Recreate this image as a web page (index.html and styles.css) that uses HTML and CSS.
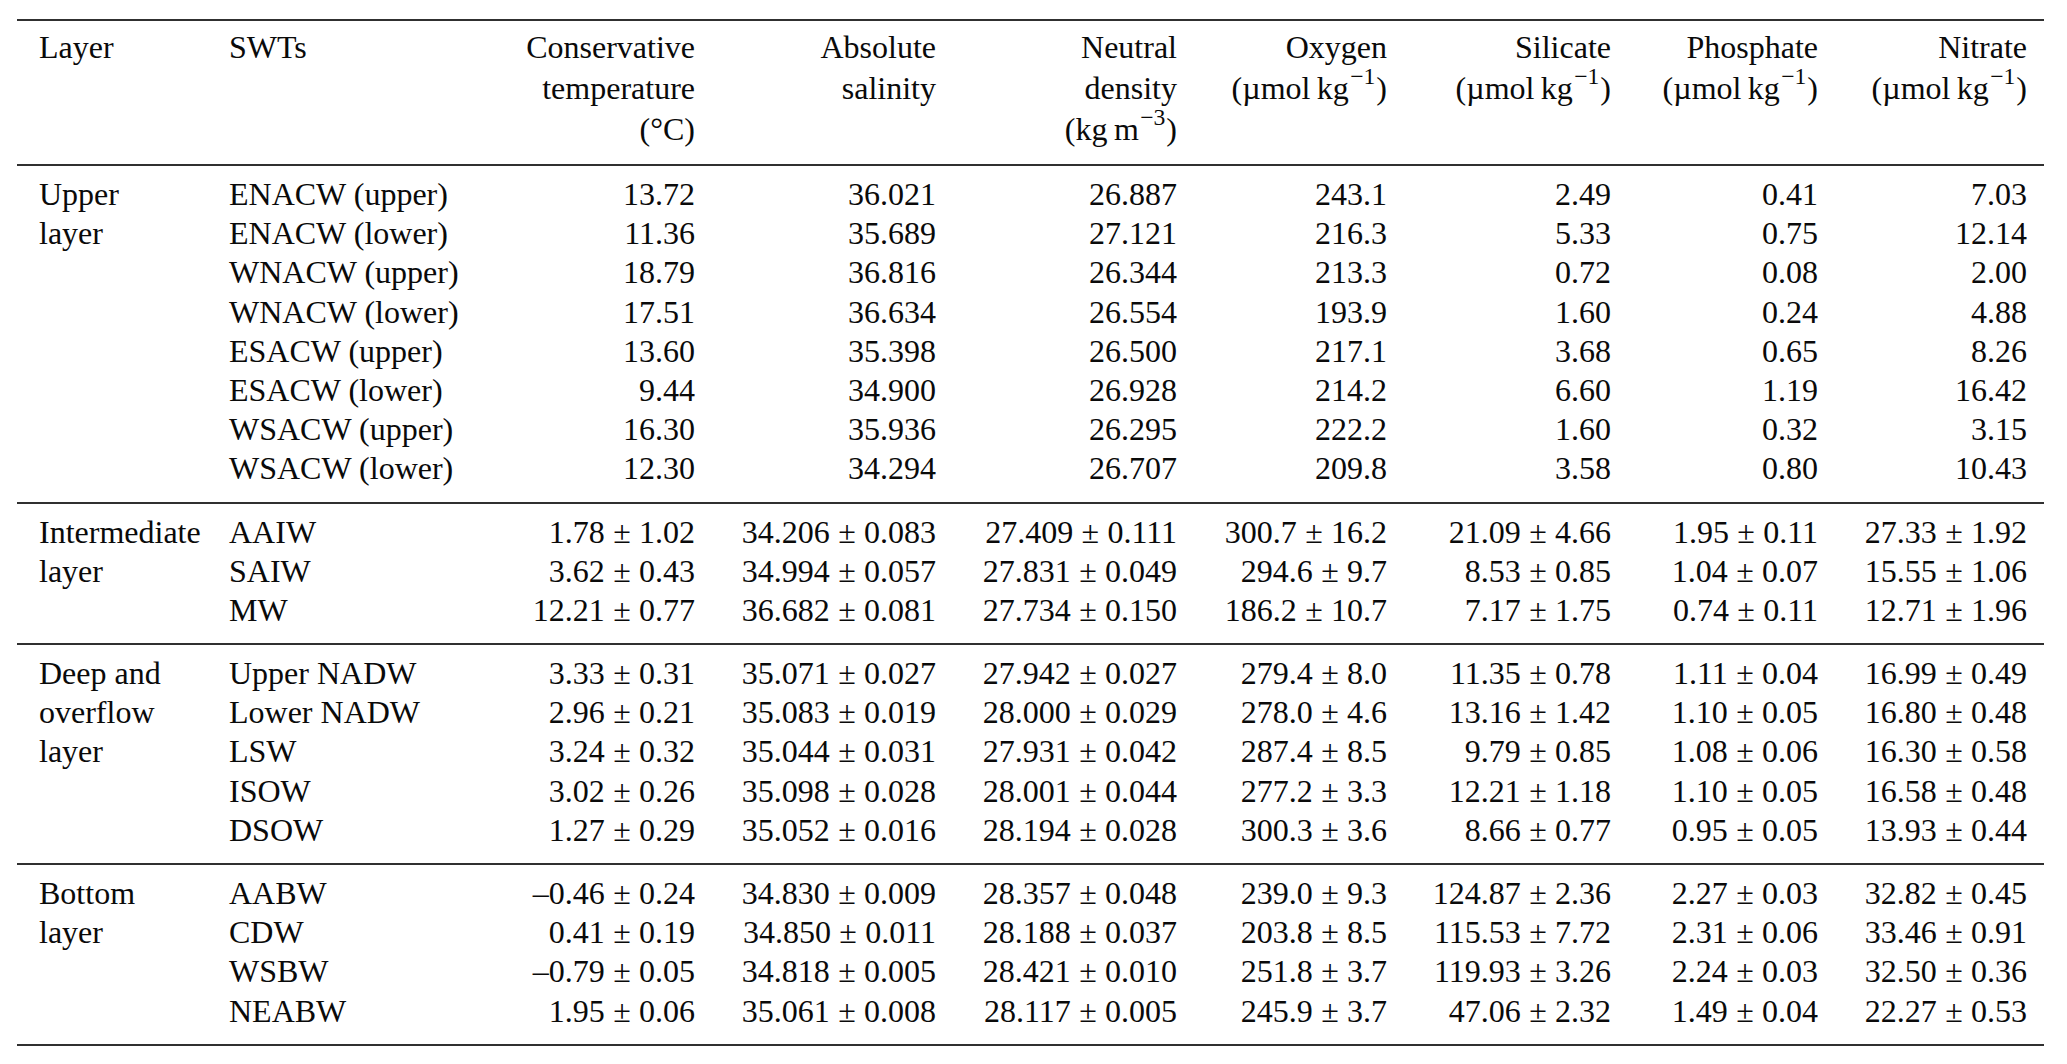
FILE: index.html
```html
<!DOCTYPE html>
<html>
<head>
<meta charset="utf-8">
<title>Source water types</title>
<link rel="stylesheet" href="styles.css">
</head>
<body>
<div class="table">
  <div class="grid head">
    <div class="l">Layer</div>
    <div class="l">SWTs</div>
    <div class="r">Conservative<br>temperature<br>(°C)</div>
    <div class="r">Absolute<br>salinity</div>
    <div class="r">Neutral<br>density<br>(kg&thinsp;m<span class="sup">−3</span>)</div>
    <div class="r">Oxygen<br>(µmol&thinsp;kg<span class="sup">−1</span>)</div>
    <div class="r">Silicate<br>(µmol&thinsp;kg<span class="sup">−1</span>)</div>
    <div class="r">Phosphate<br>(µmol&thinsp;kg<span class="sup">−1</span>)</div>
    <div class="r">Nitrate<br>(µmol&thinsp;kg<span class="sup">−1</span>)</div>
  </div>

  <div class="grid group">
    <div class="l layer span8">Upper<br>layer</div>
    <div class="l">ENACW (upper)</div><div class="r">13.72</div><div class="r">36.021</div><div class="r">26.887</div><div class="r">243.1</div><div class="r">2.49</div><div class="r">0.41</div><div class="r">7.03</div>
    <div class="l">ENACW (lower)</div><div class="r">11.36</div><div class="r">35.689</div><div class="r">27.121</div><div class="r">216.3</div><div class="r">5.33</div><div class="r">0.75</div><div class="r">12.14</div>
    <div class="l">WNACW (upper)</div><div class="r">18.79</div><div class="r">36.816</div><div class="r">26.344</div><div class="r">213.3</div><div class="r">0.72</div><div class="r">0.08</div><div class="r">2.00</div>
    <div class="l">WNACW (lower)</div><div class="r">17.51</div><div class="r">36.634</div><div class="r">26.554</div><div class="r">193.9</div><div class="r">1.60</div><div class="r">0.24</div><div class="r">4.88</div>
    <div class="l">ESACW (upper)</div><div class="r">13.60</div><div class="r">35.398</div><div class="r">26.500</div><div class="r">217.1</div><div class="r">3.68</div><div class="r">0.65</div><div class="r">8.26</div>
    <div class="l">ESACW (lower)</div><div class="r">9.44</div><div class="r">34.900</div><div class="r">26.928</div><div class="r">214.2</div><div class="r">6.60</div><div class="r">1.19</div><div class="r">16.42</div>
    <div class="l">WSACW (upper)</div><div class="r">16.30</div><div class="r">35.936</div><div class="r">26.295</div><div class="r">222.2</div><div class="r">1.60</div><div class="r">0.32</div><div class="r">3.15</div>
    <div class="l">WSACW (lower)</div><div class="r">12.30</div><div class="r">34.294</div><div class="r">26.707</div><div class="r">209.8</div><div class="r">3.58</div><div class="r">0.80</div><div class="r">10.43</div>
  </div>

  <div class="grid group">
    <div class="l layer span3">Intermediate<br>layer</div>
    <div class="l">AAIW</div><div class="r">1.78<span class="pm">±</span>1.02</div><div class="r">34.206<span class="pm">±</span>0.083</div><div class="r">27.409<span class="pm">±</span>0.111</div><div class="r">300.7<span class="pm">±</span>16.2</div><div class="r">21.09<span class="pm">±</span>4.66</div><div class="r">1.95<span class="pm">±</span>0.11</div><div class="r">27.33<span class="pm">±</span>1.92</div>
    <div class="l">SAIW</div><div class="r">3.62<span class="pm">±</span>0.43</div><div class="r">34.994<span class="pm">±</span>0.057</div><div class="r">27.831<span class="pm">±</span>0.049</div><div class="r">294.6<span class="pm">±</span>9.7</div><div class="r">8.53<span class="pm">±</span>0.85</div><div class="r">1.04<span class="pm">±</span>0.07</div><div class="r">15.55<span class="pm">±</span>1.06</div>
    <div class="l">MW</div><div class="r">12.21<span class="pm">±</span>0.77</div><div class="r">36.682<span class="pm">±</span>0.081</div><div class="r">27.734<span class="pm">±</span>0.150</div><div class="r">186.2<span class="pm">±</span>10.7</div><div class="r">7.17<span class="pm">±</span>1.75</div><div class="r">0.74<span class="pm">±</span>0.11</div><div class="r">12.71<span class="pm">±</span>1.96</div>
  </div>

  <div class="grid group">
    <div class="l layer span5">Deep and<br>overflow<br>layer</div>
    <div class="l">Upper NADW</div><div class="r">3.33<span class="pm">±</span>0.31</div><div class="r">35.071<span class="pm">±</span>0.027</div><div class="r">27.942<span class="pm">±</span>0.027</div><div class="r">279.4<span class="pm">±</span>8.0</div><div class="r">11.35<span class="pm">±</span>0.78</div><div class="r">1.11<span class="pm">±</span>0.04</div><div class="r">16.99<span class="pm">±</span>0.49</div>
    <div class="l">Lower NADW</div><div class="r">2.96<span class="pm">±</span>0.21</div><div class="r">35.083<span class="pm">±</span>0.019</div><div class="r">28.000<span class="pm">±</span>0.029</div><div class="r">278.0<span class="pm">±</span>4.6</div><div class="r">13.16<span class="pm">±</span>1.42</div><div class="r">1.10<span class="pm">±</span>0.05</div><div class="r">16.80<span class="pm">±</span>0.48</div>
    <div class="l">LSW</div><div class="r">3.24<span class="pm">±</span>0.32</div><div class="r">35.044<span class="pm">±</span>0.031</div><div class="r">27.931<span class="pm">±</span>0.042</div><div class="r">287.4<span class="pm">±</span>8.5</div><div class="r">9.79<span class="pm">±</span>0.85</div><div class="r">1.08<span class="pm">±</span>0.06</div><div class="r">16.30<span class="pm">±</span>0.58</div>
    <div class="l">ISOW</div><div class="r">3.02<span class="pm">±</span>0.26</div><div class="r">35.098<span class="pm">±</span>0.028</div><div class="r">28.001<span class="pm">±</span>0.044</div><div class="r">277.2<span class="pm">±</span>3.3</div><div class="r">12.21<span class="pm">±</span>1.18</div><div class="r">1.10<span class="pm">±</span>0.05</div><div class="r">16.58<span class="pm">±</span>0.48</div>
    <div class="l">DSOW</div><div class="r">1.27<span class="pm">±</span>0.29</div><div class="r">35.052<span class="pm">±</span>0.016</div><div class="r">28.194<span class="pm">±</span>0.028</div><div class="r">300.3<span class="pm">±</span>3.6</div><div class="r">8.66<span class="pm">±</span>0.77</div><div class="r">0.95<span class="pm">±</span>0.05</div><div class="r">13.93<span class="pm">±</span>0.44</div>
  </div>

  <div class="grid group">
    <div class="l layer span4">Bottom<br>layer</div>
    <div class="l">AABW</div><div class="r">–0.46<span class="pm">±</span>0.24</div><div class="r">34.830<span class="pm">±</span>0.009</div><div class="r">28.357<span class="pm">±</span>0.048</div><div class="r">239.0<span class="pm">±</span>9.3</div><div class="r">124.87<span class="pm">±</span>2.36</div><div class="r">2.27<span class="pm">±</span>0.03</div><div class="r">32.82<span class="pm">±</span>0.45</div>
    <div class="l">CDW</div><div class="r">0.41<span class="pm">±</span>0.19</div><div class="r">34.850<span class="pm">±</span>0.011</div><div class="r">28.188<span class="pm">±</span>0.037</div><div class="r">203.8<span class="pm">±</span>8.5</div><div class="r">115.53<span class="pm">±</span>7.72</div><div class="r">2.31<span class="pm">±</span>0.06</div><div class="r">33.46<span class="pm">±</span>0.91</div>
    <div class="l">WSBW</div><div class="r">–0.79<span class="pm">±</span>0.05</div><div class="r">34.818<span class="pm">±</span>0.005</div><div class="r">28.421<span class="pm">±</span>0.010</div><div class="r">251.8<span class="pm">±</span>3.7</div><div class="r">119.93<span class="pm">±</span>3.26</div><div class="r">2.24<span class="pm">±</span>0.03</div><div class="r">32.50<span class="pm">±</span>0.36</div>
    <div class="l">NEABW</div><div class="r">1.95<span class="pm">±</span>0.06</div><div class="r">35.061<span class="pm">±</span>0.008</div><div class="r">28.117<span class="pm">±</span>0.005</div><div class="r">245.9<span class="pm">±</span>3.7</div><div class="r">47.06<span class="pm">±</span>2.32</div><div class="r">1.49<span class="pm">±</span>0.04</div><div class="r">22.27<span class="pm">±</span>0.53</div>
  </div>
</div>
</body>
</html>
```

FILE: styles.css
```css
html, body {
  margin: 0;
  padding: 0;
  background: #ffffff;
}

body {
  font-family: "Liberation Serif", "Times New Roman", serif;
  font-size: 32px;
  color: #0a0a0a;
}

.table {
  margin: 19px 0 0 17px;
  width: 2027px;
  border-top: 2px solid #303030;
  border-bottom: 2px solid #303030;
}

.grid {
  display: grid;
  grid-template-columns: 190px 221px 245px 241px 241px 210px 224px 207px 209px;
  padding-left: 22px;
  padding-right: 17px;
}

.head {
  line-height: 41px;
  padding-top: 5.5px;
  padding-bottom: 14.5px;
}

.group {
  border-top: 2px solid #303030;
  line-height: 39.2px;
  grid-auto-rows: 39.2px;
  padding-top: 9px;
  padding-bottom: 13px;
}

.l {
  text-align: left;
  white-space: nowrap;
}

.r {
  text-align: right;
  white-space: nowrap;
}

.layer {
  grid-column: 1;
}

.span3 { grid-row: span 3; }
.span4 { grid-row: span 4; }
.span5 { grid-row: span 5; }
.span8 { grid-row: span 8; }

.sup {
  font-size: 0.74em;
  line-height: 0;
  vertical-align: 0.6em;
  padding: 0 0.04em 0 0.06em;
}

.pm {
  margin: 0 0.26em;
}
```
